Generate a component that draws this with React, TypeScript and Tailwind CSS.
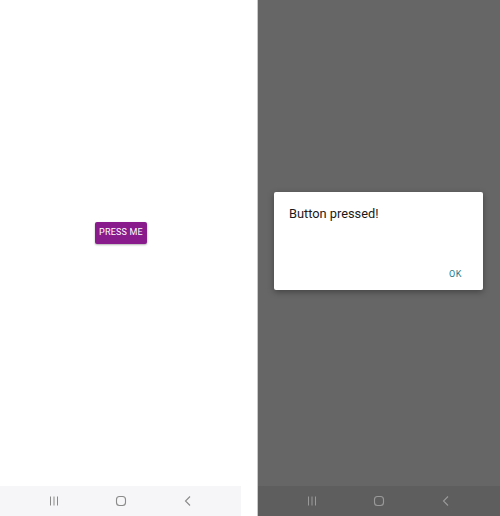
function NavBar(props: { dark?: boolean; className?: string }) {
  const stroke = props.dark ? "#9a9a9a" : "#8a8a8a";
  return (
    <div className={`flex h-[30px] items-center justify-center gap-[55px] ${props.className ?? ""}`}>
      <svg width="12" height="12" viewBox="0 0 12 12" fill="none" stroke={stroke} strokeWidth="1">
        <path d="M2.5 1.5v9M6 1.5v9M9.5 1.5v9" />
      </svg>
      <svg width="12" height="12" viewBox="0 0 12 12" fill="none" stroke={stroke} strokeWidth="1.1">
        <rect x="1.5" y="1.5" width="9" height="9" rx="3" />
      </svg>
      <svg width="12" height="12" viewBox="0 0 12 12" fill="none" stroke={stroke} strokeWidth="1.1">
        <path d="M8 1.5L3.5 6L8 10.5" />
      </svg>
    </div>
  );
}

export default function App() {
  return (
    <div
      className="flex h-[516px] w-[500px] overflow-hidden bg-white"
      style={{ fontFamily: "Roboto, 'Liberation Sans', sans-serif" }}
    >
      {/* left screen */}
      <div className="flex w-[257px] flex-col bg-white">
        <div className="flex w-[241px] flex-1 items-center justify-center pb-[20px]">
          <button
            type="button"
            className="ml-[1px] flex h-[22px] w-[52px] items-center justify-center rounded-[2px] bg-[#8a1b8c] text-[9px] font-normal tracking-[0.2px] text-white shadow-[0_1px_2px_rgba(0,0,0,0.3)]"
          >
            PRESS ME
          </button>
        </div>
        <NavBar className="w-[241px] bg-[#f6f6f8]" />
      </div>
      <div className="w-[1px] bg-[#c9c9c9]" />
      {/* right screen */}
      <div className="flex flex-1 flex-col bg-[#666666]">
        <div className="flex flex-1 items-start pt-[192px] pl-[16px]">
          <div className="flex h-[98px] w-[209px] flex-col rounded-[2px] bg-white shadow-[0_2px_6px_rgba(0,0,0,0.35)]">
            <div className="pt-[12px] pl-[15px] text-[12.8px] font-normal text-[#1a1a1a]">
              Button pressed!
            </div>
            <div className="flex flex-1 items-end justify-end pr-[21px] pb-[9px]">
              <span className="text-[9px] font-normal tracking-[0.6px] text-[#1d7c8e]">OK</span>
            </div>
          </div>
        </div>
        <NavBar dark className="bg-[#5e5e5e]" />
      </div>
    </div>
  );
}
